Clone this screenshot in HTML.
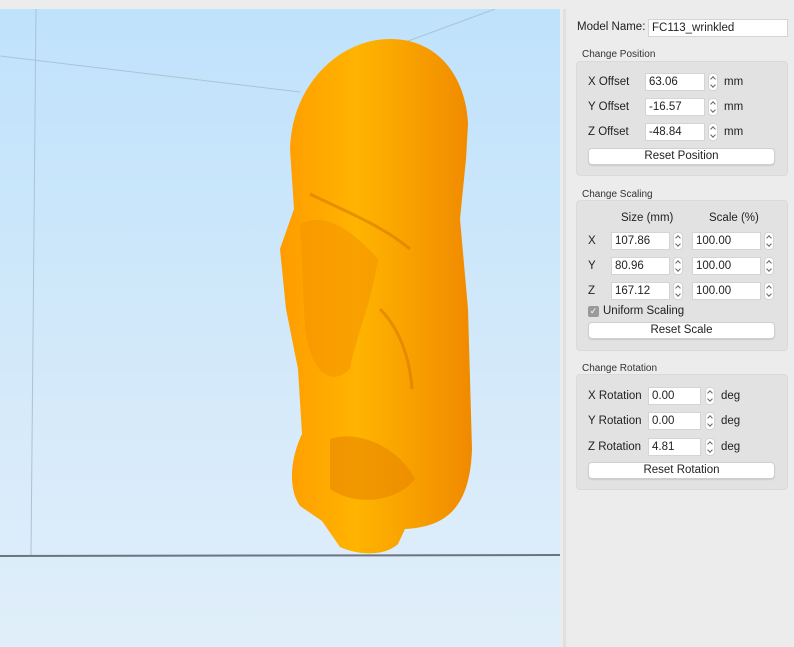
<!DOCTYPE html><html><head><style>
*{margin:0;padding:0;box-sizing:border-box}
body{width:794px;height:647px;overflow:hidden;background:#ececec;font-family:"Liberation Sans",sans-serif;font-size:11.5px;color:#222;position:relative}
.a{position:absolute;white-space:nowrap}
.in{position:absolute;background:#fff;border:1px solid #d4d4d4;height:18px;padding:1px 3px;font-size:11.5px;line-height:15px}
.st{position:absolute;width:10px;height:18px;background:#fff;border:1px solid #d4d4d4;border-radius:4px}
.st::before{content:"";position:absolute;left:2px;top:3px;width:3px;height:3px;border-left:1px solid #666;border-top:1px solid #666;transform:rotate(45deg)}
.st::after{content:"";position:absolute;left:2px;top:9px;width:3px;height:3px;border-right:1px solid #666;border-bottom:1px solid #666;transform:rotate(45deg)}
.bx{position:absolute;background:#e2e2e2;border:1px solid #dadada;border-radius:4px}
.bt{position:absolute;background:#fff;border:1px solid #cfcfcf;border-radius:4px;height:17px;text-align:center;line-height:15px;font-size:11.5px;box-shadow:0 1px 1px rgba(0,0,0,.1)}
.h{position:absolute;font-size:10px;color:#333}
</style></head><body>
<div class="a" style="left:0;top:9px;width:560px;height:638px;background:linear-gradient(#bfe2fb,#d8ebfa 70%,#e0eef9)"></div>
<svg class="a" style="left:0;top:9px" width="560" height="638">
<line x1="0" y1="47" x2="300" y2="83" stroke="#a9c4d6" stroke-width="1"/>
<line x1="36" y1="0" x2="31" y2="546" stroke="#a9c4d6" stroke-width="1"/>
<line x1="400" y1="35" x2="495" y2="0" stroke="#a9c4d6"/>
<line x1="0" y1="547" x2="560" y2="546" stroke="#6a7580" stroke-width="2"/>
<defs><linearGradient id="g" x1="0" x2="1"><stop offset="0" stop-color="#ff9c00"/><stop offset=".4" stop-color="#ffb400"/><stop offset="1" stop-color="#f08a00"/></linearGradient></defs>
<path d="M390 30 C440 30 466 70 468 115 L466 150 L460 210 L468 300 L472 440 C470 500 445 518 405 520 L398 535 C385 547 360 547 340 538 L322 512 L300 497 C288 480 290 450 302 425 L298 360 L286 300 L280 240 L294 200 L290 140 C292 75 340 30 390 30 Z" fill="url(#g)"/>
<path d="M300 215 C330 200 360 230 378 250 C370 300 355 330 350 360 C330 380 310 360 305 320 Z" fill="#f59500" opacity=".6"/>
<path d="M330 430 C360 420 400 440 415 470 C400 490 360 500 330 480 Z" fill="#e88600" opacity=".6"/>
<path d="M310 185 C340 200 380 215 410 240" stroke="#d97a00" stroke-width="3" fill="none" opacity=".6"/>
<path d="M380 300 C400 320 410 350 412 380" stroke="#d97a00" stroke-width="3" fill="none" opacity=".6"/>
</svg>
<div class="a" style="left:563px;top:9px;width:3px;height:638px;background:#e0e0e0"></div>
<div class="a" style="left:577px;top:21px">Model Name:</div>
<div class="in" style="left:648px;top:19px;width:140px">FC113_wrinkled</div>
<div class="h" style="left:582px;top:49px">Change Position</div>
<div class="bx" style="left:576px;top:61px;width:212px;height:115px"></div>
<div class="a" style="left:588px;top:76px">X Offset</div><div class="in" style="left:645px;top:73px;width:60px">63.06</div><div class="st" style="left:708px;top:73px"></div><div class="a" style="left:724px;top:76px">mm</div>
<div class="a" style="left:588px;top:101px">Y Offset</div><div class="in" style="left:645px;top:98px;width:60px">-16.57</div><div class="st" style="left:708px;top:98px"></div><div class="a" style="left:724px;top:101px">mm</div>
<div class="a" style="left:588px;top:126px">Z Offset</div><div class="in" style="left:645px;top:123px;width:60px">-48.84</div><div class="st" style="left:708px;top:123px"></div><div class="a" style="left:724px;top:126px">mm</div>
<div class="bt" style="left:588px;top:148px;width:187px">Reset Position</div>
<div class="h" style="left:582px;top:189px">Change Scaling</div>
<div class="bx" style="left:576px;top:200px;width:212px;height:151px"></div>
<div class="a" style="left:621px;top:212px">Size (mm)</div><div class="a" style="left:709px;top:212px">Scale (%)</div>
<div class="a" style="left:588px;top:235px">X</div><div class="in" style="left:611px;top:232px;width:59px">107.86</div><div class="st" style="left:673px;top:232px"></div><div class="in" style="left:692px;top:232px;width:69px">100.00</div><div class="st" style="left:764px;top:232px"></div>
<div class="a" style="left:588px;top:260px">Y</div><div class="in" style="left:611px;top:257px;width:59px">80.96</div><div class="st" style="left:673px;top:257px"></div><div class="in" style="left:692px;top:257px;width:69px">100.00</div><div class="st" style="left:764px;top:257px"></div>
<div class="a" style="left:588px;top:285px">Z</div><div class="in" style="left:611px;top:282px;width:59px">167.12</div><div class="st" style="left:673px;top:282px"></div><div class="in" style="left:692px;top:282px;width:69px">100.00</div><div class="st" style="left:764px;top:282px"></div>
<div class="a" style="left:588px;top:306px;width:11px;height:11px;background:#9a9a9a;border-radius:2px;color:#fff;font-size:9px;line-height:11px;text-align:center">✓</div>
<div class="a" style="left:603px;top:305px">Uniform Scaling</div>
<div class="bt" style="left:588px;top:322px;width:187px">Reset Scale</div>
<div class="h" style="left:582px;top:363px">Change Rotation</div>
<div class="bx" style="left:576px;top:374px;width:212px;height:116px"></div>
<div class="a" style="left:588px;top:390px">X Rotation</div><div class="in" style="left:648px;top:387px;width:53px">0.00</div><div class="st" style="left:705px;top:387px"></div><div class="a" style="left:721px;top:390px">deg</div>
<div class="a" style="left:588px;top:415px">Y Rotation</div><div class="in" style="left:648px;top:412px;width:53px">0.00</div><div class="st" style="left:705px;top:412px"></div><div class="a" style="left:721px;top:415px">deg</div>
<div class="a" style="left:588px;top:441px">Z Rotation</div><div class="in" style="left:648px;top:438px;width:53px">4.81</div><div class="st" style="left:705px;top:438px"></div><div class="a" style="left:721px;top:441px">deg</div>
<div class="bt" style="left:588px;top:462px;width:187px">Reset Rotation</div>
</body></html>
